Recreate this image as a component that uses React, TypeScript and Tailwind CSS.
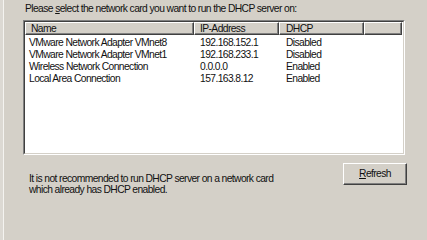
import React from "react";

const rows = [
  ["VMware Network Adapter VMnet8", "192.168.152.1", "Disabled"],
  ["VMware Network Adapter VMnet1", "192.168.233.1", "Disabled"],
  ["Wireless Network Connection", "0.0.0.0", "Enabled"],
  ["Local Area Connection", "157.163.8.12", "Enabled"],
];

function HeaderCell({ w, pl, children }: { w: string; pl: string; children?: React.ReactNode }) {
  return (
    <div
      className={`${w} ${pl} h-full flex items-center border-t border-l border-t-white border-l-white border-r border-b border-r-[#404040] border-b-[#404040] bg-[#d4d0c8] shadow-[inset_-1px_-1px_0_#808080] shrink-0`}
    >
      {children}
    </div>
  );
}

export default function App() {
  return (
    <div
      className="w-[427px] h-[240px] bg-[#d4d0c8] text-[#111] flex overflow-hidden"
      style={{ fontFamily: '"Liberation Sans", Arial, sans-serif', fontSize: "10.3px", letterSpacing: "-0.6px" }}
    >
      <div className="w-[3px] h-full bg-[#dcd9d3] shrink-0" />
      <div className="w-px h-full bg-[#f4f3f0] shrink-0" />
      <div className="flex flex-col pl-[19px] pt-[2px]">
        <div className="pl-[2px] leading-[13px] h-[13px] whitespace-nowrap">
          Please <span className="underline">s</span>elect the network card you want to run the DHCP server on:
        </div>
        <div className="mt-[5px] w-[382px] h-[135px] border border-t-[#808080] border-l-[#808080] border-b-white border-r-white">
          <div className="w-full h-full border border-t-[#404040] border-l-[#404040] border-b-[#d4d0c8] border-r-[#d4d0c8] bg-white flex flex-col">
            <div className="h-[13px] flex leading-[11px] shrink-0">
              <HeaderCell w="w-[169px]" pl="pl-[5px]">Name</HeaderCell>
              <HeaderCell w="w-[85px]" pl="pl-[5px]">IP-Address</HeaderCell>
              <HeaderCell w="w-[85px]" pl="pl-[6px]">DHCP</HeaderCell>
              <HeaderCell w="w-[38px]" pl="pl-0" />
            </div>
            <div className="pt-[2px] flex flex-col">
              {rows.map((r) => (
                <div key={r[0]} className="h-[12px] leading-[12px] flex whitespace-nowrap">
                  <div className="w-[169px] pl-[4px] shrink-0">{r[0]}</div>
                  <div className="w-[85px] pl-[6px] shrink-0">{r[1]}</div>
                  <div className="w-[85px] pl-[7px] shrink-0">{r[2]}</div>
                </div>
              ))}
            </div>
          </div>
        </div>
        <div className="flex mt-[8px] w-[384px]">
          <div className="pl-[6px] pt-[10px] leading-[11px] flex-1">
            <div className="whitespace-nowrap">It is not recommended to run DHCP server on a network card</div>
            <div className="whitespace-nowrap">which already has DHCP enabled.</div>
          </div>
          <div className="w-[64px] h-[22px] border border-t-white border-l-white border-r-[#404040] border-b-[#404040] shadow-[inset_-1px_-1px_0_#808080] flex items-center justify-center leading-[12px] shrink-0">
            <span>
              <span className="underline">R</span>efresh
            </span>
          </div>
        </div>
      </div>
    </div>
  );
}
